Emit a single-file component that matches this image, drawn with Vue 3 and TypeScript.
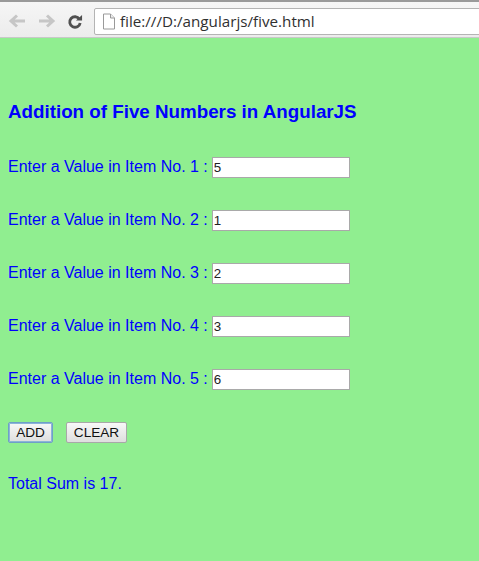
<script setup lang="ts">
const items = [
  { no: 1, value: '5' },
  { no: 2, value: '1' },
  { no: 3, value: '2' },
  { no: 4, value: '3' },
  { no: 5, value: '6' },
]
</script>

<template>
  <div class="window">
    <header class="toolbar">
      <svg class="nav" width="18" height="16" viewBox="0 0 18 16">
        <path d="M17 8H4M9 2.500L3 8l6 5.500" fill="none" stroke="#c6c6c6" stroke-width="3" />
      </svg>
      <svg class="nav nav-forward" width="18" height="16" viewBox="0 0 18 16">
        <path d="M1 8h13M9 2.500L15 8l-6 5.500" fill="none" stroke="#c6c6c6" stroke-width="3" />
      </svg>
      <svg class="reload" width="16" height="17" viewBox="0 0 17 17">
        <path d="M13.200 6A5.600 5.600 0 1 0 14 10" fill="none" stroke="#505050" stroke-width="3" />
        <path d="M9.500 7.500L16 1.500v6z" fill="#505050" />
      </svg>
      <div class="address">
        <svg width="14" height="17" viewBox="0 0 14 17">
          <path d="M1.500 1h7l4 4v11h-11z" fill="#fff" stroke="#9a9a9a" />
          <path d="M8.500 1v4h4" fill="#eee" stroke="#9a9a9a" />
        </svg>
        <span class="url">file:///D:/angularjs/five.html</span>
      </div>
    </header>
    <main class="page">
      <h1 class="title">Addition of Five Numbers in AngularJS</h1>
      <div v-for="item in items" :key="item.no" class="row">
        <label class="label">Enter a Value in Item No. {{ item.no }} :</label>
        <input class="field" type="text" :value="item.value" />
      </div>
      <div class="actions">
        <button class="btn btn-add" type="button">ADD</button>
        <button class="btn btn-clear" type="button">CLEAR</button>
      </div>
      <p class="total">Total Sum is 17.</p>
    </main>
  </div>
</template>

<style>
html, body { margin: 0; padding: 0; }
</style>

<style scoped>
.window {
  width: 479px;
  height: 561px;
  overflow: hidden;
  display: flex;
  flex-direction: column;
  background: #90ee90;
  font-family: "Liberation Sans", Arial, sans-serif;
}
.toolbar {
  box-sizing: border-box;
  height: 38px;
  flex: none;
  display: flex;
  align-items: center;
  padding: 3px 0 0 8px;
  background: linear-gradient(#f6f6f6, #ececec);
  border-top: 2px solid #9a9a9a;
  border-bottom: 1px solid #c8c8c8;
}
.nav { margin-right: 12px; }
.nav-forward { margin-right: 11px; }
.reload { margin-right: 11px; }
.address {
  box-sizing: border-box;
  flex: 1;
  height: 27px;
  margin-right: -4px;
  display: flex;
  align-items: center;
  gap: 4px;
  padding-left: 7px;
  background: #fff;
  border: 1px solid #b4b4b4;
  border-radius: 2px 0 0 2px;
}
.url {
  font-family: "Open Sans", "Liberation Sans", sans-serif;
  font-size: 15.200px;
  color: #303030;
}
.page {
  flex: 1;
  padding: 0 8px;
  color: #0000ff;
}
.title {
  margin: 63px 0 0;
  font-size: 18.770px;
  line-height: 22px;
  font-weight: bold;
}
.row {
  height: 21px;
  display: flex;
  align-items: center;
  gap: 4px;
  margin-top: 32px;
}
.title + .row { margin-top: 34px; }
.label {
  font-size: 16px;
  line-height: 19px;
  margin-top: -2px;
}
.field {
  box-sizing: border-box;
  width: 138px;
  height: 21px;
  padding: 1px 1px;
  margin: 0;
  background: #fff;
  border: 1px solid #a9a9a9;
  font-family: "Liberation Sans", Arial, sans-serif;
  font-size: 13.333px;
  color: #222;
  outline: none;
}
.actions {
  display: flex;
  gap: 13px;
  margin-top: 32px;
}
.btn {
  box-sizing: border-box;
  height: 21px;
  padding: 0;
  background: linear-gradient(#f8f8f8, #dedede);
  border: 1px solid #a8a8a8;
  border-radius: 2px;
  font-family: "Liberation Sans", Arial, sans-serif;
  font-size: 13.600px;
  color: #111;
}
.btn-add {
  width: 45px;
  border-color: #6f9fc8;
  box-shadow: 0 0 0 1px #8cb4d8 inset;
}
.btn-clear { width: 61px; }
.total {
  margin: 31px 0 0;
  font-size: 16px;
  line-height: 19px;
}
</style>
